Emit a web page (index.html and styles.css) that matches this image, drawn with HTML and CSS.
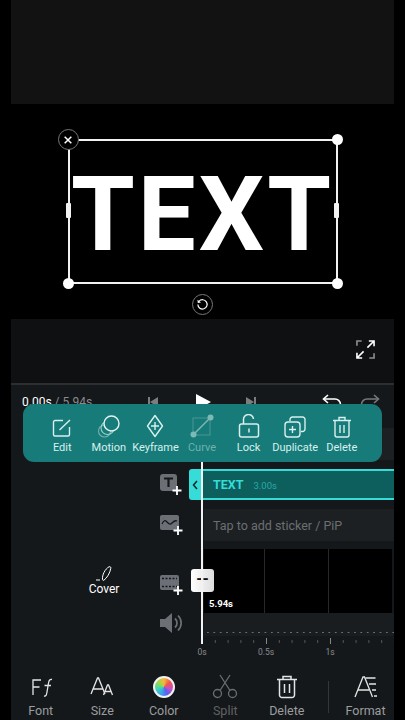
FILE: index.html
```html
<!DOCTYPE html>
<html lang="en">
<head>
<meta charset="utf-8">
<title>Text editor</title>
<link rel="stylesheet" href="styles.css">
</head>
<body>
<div class="app">
  <div class="preview-top"></div>
  <div class="stage">
    <div class="selection">
      <span class="sel-text">TEXT</span>
      <span class="knob knob-tr"></span>
      <span class="knob knob-bl"></span>
      <span class="knob knob-br"></span>
      <span class="grip grip-l"></span>
      <span class="grip grip-r"></span>
      <span class="round-btn round-close"><svg viewBox="0 0 12 12" width="10" height="10"><path d="M2 2l8 8M10 2l-8 8" stroke="#fff" stroke-width="1.800" fill="none"/></svg></span>
      <span class="round-btn round-rotate"><svg viewBox="0 0 14 14" width="13" height="13"><path d="M3.200 3.600A5 5 0 1 1 2 7" stroke="#fff" stroke-width="1.300" fill="none"/><path d="M1.600 1.800l.3 3.600 3.500-.6z" fill="#fff"/></svg></span>
    </div>
  </div>
  <div class="editor">
    <div class="viewer">
      <svg class="fullscreen" viewBox="0 0 20 20" width="19" height="19" fill="none" stroke-width="1.700"><path d="M1 6V1h5" stroke="#8d8f91"/><path d="M19 14v5h-5" stroke="#8d8f91"/><path d="M12 8l7-7M13.500 1H19v5.500" stroke="#fff"/><path d="M8 12l-7 7M6.500 19H1v-5.500" stroke="#fff"/></svg>
    </div>
    <div class="divider"></div>
    <div class="transport">
      <div class="time"><span class="time-now">0.00s</span><span class="time-total"> / 5.94s</span></div>
      <svg class="t-icon" viewBox="0 0 10 10" width="10" height="10"><path d="M0 0h2v10H0zM10 0v10L2 5z" fill="#7b7d7f"/></svg>
      <svg class="t-icon t-play" viewBox="0 0 15 16" width="15" height="16"><path d="M0 0l15 8-15 8z" fill="#fff"/></svg>
      <svg class="t-icon" viewBox="0 0 10 10" width="10" height="10"><path d="M10 0H8v10h2zM0 0v10l8-5z" fill="#7b7d7f"/></svg>
      <svg class="t-undo" viewBox="0 0 20 14" width="20" height="14" fill="none" stroke="#fff" stroke-width="1.600"><path d="M6 1L1.500 5 6 9"/><path d="M2 5h11a5.500 5.500 0 0 1 5.500 5.500V14"/></svg>
      <svg class="t-redo" viewBox="0 0 20 14" width="20" height="14" fill="none" stroke="#77797b" stroke-width="1.600"><path d="M14 1l4.500 4L14 9"/><path d="M18 5H7a5.500 5.500 0 0 0-5.500 5.500V14"/></svg>
    </div>
    <div class="hidden-track"></div>
    <div class="row row-text">
      <div class="gutter gutter-text">
        <svg class="add" viewBox="0 0 23 22" width="23" height="22"><rect x="0" y="0" width="17" height="17" rx="3" fill="#6d6f76"/><path d="M4 4.500h9M8.500 4.500V13" stroke="#15181b" stroke-width="2.200" fill="none"/><path d="M17 12v9M12.500 16.500h9" stroke="#fff" stroke-width="1.800"/></svg>
      </div>
      <div class="clip">
        <div class="clip-handle"><svg viewBox="0 0 6 10" width="6" height="10"><path d="M5 1L1.500 5 5 9" fill="none" stroke="#10282a" stroke-width="1.500"/></svg></div>
        <div class="clip-body"><span class="clip-name">TEXT</span><span class="clip-time">3.00s</span></div>
      </div>
    </div>
    <div class="row row-sticker">
      <div class="gutter">
        <svg class="add" viewBox="0 0 24 22" width="24" height="22"><rect x="0" y="1" width="19" height="15" rx="2" fill="#6d6f76"/><path d="M2 10c2-4 3-4 5-2s3 3 5 1 3-3 5-2M3 4.500h.1" stroke="#15181b" stroke-width="1.300" fill="none"/><path d="M18 12v9M13.500 16.500h9" stroke="#fff" stroke-width="1.800"/></svg>
      </div>
      <div class="sticker-slot">Tap to add sticker / PiP</div>
    </div>
    <div class="row row-video">
      <div class="gutter gutter-video">
        <div class="cover">
          <svg viewBox="0 0 16 15" width="16" height="15" fill="none" stroke="#fff" stroke-width="1"><path d="M0 14h4"/><path d="M6.500 13.500C6 9 9 3 13 .8c1.500-.5 2 .5 1.800 1.500C14 7 11 12 7.800 14.300c-.8.200-1.200-.2-1.300-.8z"/></svg>
          <span class="cover-label">Cover</span>
        </div>
        <svg class="add add-film" viewBox="0 0 24 22" width="24" height="22"><rect x="0" y="1" width="19" height="15" rx="2" fill="#6d6f76"/><path d="M2 4.500h15M2 12.500h15" stroke="#15181b" stroke-width="1.400" stroke-dasharray="2 1.500" fill="none"/><path d="M18 12v9M13.500 16.500h9" stroke="#fff" stroke-width="1.800"/></svg>
      </div>
      <div class="video-strip">
        <div class="frame"></div>
        <div class="frame"></div>
        <div class="frame frame-last"></div>
        <span class="duration">5.94s</span>
      </div>
      <div class="tail-handle">--</div>
    </div>
    <div class="row row-audio">
      <div class="gutter">
        <svg class="add add-speaker" viewBox="0 0 23 20" width="23" height="20"><path d="M0 6h5l7-6v20l-7-6H0z" fill="#6d6f76"/><path d="M15 5.500a6 6 0 0 1 0 9M18 2.500a10.500 10.500 0 0 1 0 15" stroke="#6d6f76" stroke-width="1.700" fill="none"/></svg>
      </div>
      <div class="audio-slot"></div>
    </div>
    <div class="ruler">
      <div class="ticks"></div>
      <div class="ruler-labels"><span>0s</span><span>0.5s</span><span>1s</span></div>
    </div>
    <div class="tabs">
      <div class="tab">
        <svg viewBox="0 0 26 26" width="26" height="26" fill="none" stroke="#e4e4e4" stroke-width="1.300"><path d="M5 21V6h8M5 13h6.500"/><path d="M16 22c2 .5 2.500-1 3-4l1.500-9c.5-3 1.500-4 3.500-3.500M16.500 11.500h6.500"/></svg>
        <span>Font</span>
      </div>
      <div class="tab">
        <svg viewBox="0 0 26 26" width="26" height="26" fill="none" stroke="#e4e4e4" stroke-width="1.300"><path d="M2 20l6.500-16h1L16 20M4.500 15h9"/><path d="M14.500 21l4-10h1l4 10M16 17.500h6"/></svg>
        <span>Size</span>
      </div>
      <div class="tab">
        <span class="swatch"></span>
        <span>Color</span>
      </div>
      <div class="tab tab-dim">
        <svg viewBox="0 0 26 26" width="26" height="26" fill="none" stroke="#6b6d6f" stroke-width="1.300"><circle cx="5.500" cy="19.500" r="4"/><circle cx="20.500" cy="19.500" r="4"/><path d="M8 16.500L18 1M18 16.500L8 1"/></svg>
        <span>Split</span>
      </div>
      <div class="tab">
        <svg viewBox="0 0 26 26" width="26" height="26" fill="none" stroke="#e4e4e4" stroke-width="1.500"><path d="M3 5.500h20M9 5V2.500h8V5M5.500 6v15a2.500 2.500 0 0 0 2.500 2.500h10a2.500 2.500 0 0 0 2.500-2.500V6M10.500 10v9M15.500 10v9"/></svg>
        <span>Delete</span>
      </div>
      <div class="tab-sep"></div>
      <div class="tab tab-format">
        <svg viewBox="0 0 26 26" width="26" height="26" fill="none" stroke="#e4e4e4" stroke-width="1.300"><path d="M2 23L10 3h1.500l8 20M5 16h11"/><path d="M12.500 4h10M16 10h7M19 16h4M21 22h3"/></svg>
        <span>Format</span>
      </div>
    </div>
    <div class="playhead"></div>
    <div class="menu">
      <div class="menu-item">
        <svg viewBox="0 0 20 20" width="20" height="20" fill="none" stroke="#d8f0ee" stroke-width="1.400"><path d="M11 2.500H3a1.500 1.500 0 0 0-1.500 1.500v12.500A1.500 1.500 0 0 0 3 18h13a1.500 1.500 0 0 0 1.500-1.500V9"/><path d="M7.500 12L18 2"/></svg>
        <span>Edit</span>
      </div>
      <div class="menu-item">
        <svg viewBox="0 0 24 24" width="24" height="24" fill="none"><circle cx="7.500" cy="17" r="6" stroke="#6fb2ae" stroke-width="1.100"/><circle cx="10.500" cy="14" r="6.500" stroke="#a0cdca" stroke-width="1.100"/><circle cx="14.500" cy="9.500" r="7.500" fill="#167b79" stroke="#e4f4f2" stroke-width="1.400"/></svg>
        <span>Motion</span>
      </div>
      <div class="menu-item">
        <svg viewBox="0 0 20 24" width="20" height="24" fill="none" stroke="#d8f0ee" stroke-width="1.400"><path d="M10 1.500L17.500 12 10 22.500 2.500 12z" stroke-linejoin="round"/><path d="M10 8v8M6 12h8"/></svg>
        <span>Keyframe</span>
      </div>
      <div class="menu-item menu-dim">
        <svg viewBox="0 0 24 24" width="24" height="24" fill="none"><rect x="3" y="4" width="17" height="17" stroke="#4d9793" stroke-width="1"/><path d="M3.500 20.500L20.500 3.500" stroke="#7dbab6" stroke-width="1.400"/><circle cx="3.500" cy="20.500" r="3" fill="#7dbab6"/><circle cx="20.500" cy="3.500" r="3" fill="#7dbab6"/></svg>
        <span>Curve</span>
      </div>
      <div class="menu-item">
        <svg viewBox="0 0 22 24" width="22" height="24" fill="none" stroke="#d8f0ee" stroke-width="1.500"><rect x="1.500" y="10" width="19" height="13" rx="2"/><path d="M5.500 10V6a5 5 0 0 1 10-1M11 14.500v4"/></svg>
        <span>Lock</span>
      </div>
      <div class="menu-item">
        <svg viewBox="0 0 22 22" width="22" height="22" fill="none" stroke="#d8f0ee" stroke-width="1.400"><rect x="1" y="6" width="15" height="15" rx="3"/><path d="M6 5V3.500A2.500 2.500 0 0 1 8.500 1h10A2.500 2.500 0 0 1 21 3.500V13a2.500 2.500 0 0 1-2.500 2.500H17M8.500 10v7M5 13.500h7"/></svg>
        <span>Duplicate</span>
      </div>
      <div class="menu-item">
        <svg viewBox="0 0 20 22" width="20" height="22" fill="none" stroke="#d8f0ee" stroke-width="1.400"><path d="M1 4.500h18M7 4V1.500h6V4M3 5v14a2 2 0 0 0 2 2h10a2 2 0 0 0 2-2V5M8 9v8M12 9v8"/></svg>
        <span>Delete</span>
      </div>
    </div>
  </div>
</div>
</body>
</html>
```
FILE: styles.css
```css
* { box-sizing: border-box; }
html, body { margin: 0; padding: 0; background: #000; }
body { font-family: Roboto, "Liberation Sans", sans-serif; }
.app { width: 405px; height: 720px; padding: 0 11px; display: flex; flex-direction: column; overflow: hidden; background: #000; }

.preview-top { height: 104px; flex: none; background: #121212; }
.stage { height: 215px; flex: none; display: flex; align-items: center; justify-content: center; }
.selection { position: relative; width: 270px; height: 145px; border: 2px solid #f2f2f2; display: flex; align-items: center; justify-content: center; padding-top: 5px; }
.sel-text { font-family: Roboto, "Liberation Sans", sans-serif; font-weight: 700; font-size: 103px; line-height: 1; color: #fff; letter-spacing: 3px; white-space: nowrap; }
.knob { position: absolute; width: 11px; height: 11px; border-radius: 50%; background: #fff; }
.knob-tr { top: -7px; right: -7px; }
.knob-bl { bottom: -7px; left: -7px; }
.knob-br { bottom: -7px; right: -7px; }
.grip { position: absolute; top: 62px; width: 5px; height: 15px; background: #f2f2f2; border-radius: 1px; }
.grip-l { left: -3.500px; }
.grip-r { right: -3.500px; }
.round-btn { position: absolute; width: 21px; height: 21px; border-radius: 50%; background: #000; border: 1px solid #777; display: flex; align-items: center; justify-content: center; }
.round-close { left: -12px; top: -12px; }
.round-rotate { left: 122px; bottom: -33px; }

.editor { position: relative; flex: 1; display: flex; flex-direction: column; background: #15181b; overflow: hidden; }
.viewer { height: 64px; flex: none; background: #0f1012; display: flex; align-items: center; justify-content: flex-end; padding: 0 19px 4px 0; }
.divider { height: 2px; flex: none; background: #2c2e30; }

.transport { height: 40px; flex: none; display: flex; align-items: flex-start; padding-top: 9px; }
.time { width: 137px; padding-left: 11px; padding-top: 1px; font-size: 12px; line-height: 15px; white-space: nowrap; }
.time-now { color: #fff; }
.time-total { color: #8a8c8e; }
.t-icon { flex: none; margin-top: 3px; }
.t-play { margin: 0 35px 0 38px; }
.t-undo { flex: none; margin-left: 66px; }
.t-redo { flex: none; margin-left: 18px; }

.hidden-track { height: 32px; margin: 3px 0 9px 193px; flex: none; background: #1d2023; }

.row { display: flex; flex: none; position: relative; }
.gutter { flex: none; width: 193px; padding-left: 149px; display: flex; align-items: center; }
.row-text { height: 31px; margin-bottom: 9px; }
.gutter-text { width: 178px; }
.clip { flex: 1; display: flex; min-width: 0; }
.clip-handle { width: 13px; flex: none; background: #35dcd8; border-radius: 3px 0 0 3px; display: flex; align-items: center; justify-content: center; padding-right: 2px; }
.clip-body { flex: 1; background: #0c5f5c; border-top: 2px solid #35dcd8; border-bottom: 2px solid #35dcd8; padding-left: 11px; display: flex; align-items: center; gap: 10px; }
.clip-name { color: #35dcd8; font-size: 12.500px; font-weight: 700; }
.clip-time { color: #2aa8a4; font-size: 9.500px; padding-top: 1px; }

.row-sticker { height: 32px; margin-bottom: 8px; }
.sticker-slot { flex: 1; background: #1d2023; color: #6c6f72; font-size: 12.500px; padding-left: 9px; display: flex; align-items: center; }

.row-video { height: 64px; }
.gutter-video { padding-left: 63px; gap: 41px; padding-top: 8px; align-items: flex-start; }
.cover { width: 60px; margin-top: 9px; display: flex; flex-direction: column; align-items: center; }
.cover-label { color: #fff; font-size: 12px; line-height: 15px; margin-top: 1px; }
.add { flex: none; }
.add-film { margin-top: 17px; margin-left: -15px; }
.add-speaker { margin-top: -4px; }
.video-strip { position: relative; flex: none; width: 188px; background: #000; display: flex; }
.frame { width: 64px; border-right: 1px solid #26282a; flex: none; }
.frame:first-child { width: 61px; }
.frame-last { border-right: 0; flex: 1; }
.duration { position: absolute; left: 5px; bottom: 3px; color: #fff; font-size: 9.500px; font-weight: 700; line-height: 12px; }
.tail-handle { position: absolute; left: 180px; top: 20px; width: 23px; height: 23px; border-radius: 3px; background: linear-gradient(90deg, #fff, #ddd); color: #111; font-size: 16px; font-weight: 700; line-height: 20px; text-align: center; }

.row-audio { height: 23px; }
.audio-slot { flex: 1; background-color: #1a1d20; background-image: radial-gradient(circle at 1px 19.500px, #6c6f72 .7px, transparent 1px); background-size: 6.400px 23px; background-position: 3px 0; }

.ruler { height: 24px; flex: none; position: relative; }
.ticks { height: 8px; margin: 2px 0 0 191px; background-image: linear-gradient(90deg, #888 1.500px, transparent 1.500px), linear-gradient(90deg, #555 1px, transparent 1px); background-size: 64px 6px, 12.800px 3px; background-position: 0 0, 0 2px; background-repeat: repeat-x; }
.ruler-labels { display: flex; padding-left: 159px; margin-top: 0; }
.ruler-labels span { width: 64px; text-align: center; color: #8a8c8e; font-size: 8.500px; line-height: 12px; }

.tabs { flex: 1; display: flex; align-items: flex-start; margin-left: -1px; padding-top: 14px; }
.tab { width: 61.500px; flex: none; display: flex; flex-direction: column; align-items: center; gap: 3px; color: #9b9d9f; font-size: 12.500px; line-height: 15px; white-space: nowrap; }
.tab svg, .swatch { flex: none; }
.tab-dim { color: #606264; }
.tab-sep { width: 1px; height: 32px; margin: 7px 0 0 10px; background: #33363a; flex: none; }
.tab-format { width: 60px; margin-left: 7px; }
.swatch { width: 22px; height: 22px; margin: 2px 0; border-radius: 50%; border: 2.500px solid #f2f2f2; background: conic-gradient(#f6b73c, #f0564a, #c750c8, #5a60e8, #3ba6f0, #42d6b0, #9ad94a, #f6b73c); }

.playhead { position: absolute; left: 190px; top: 86px; width: 2px; height: 239px; background: #f2f2f2; }
.menu { position: absolute; left: 12px; top: 85px; width: 359px; height: 58px; padding: 0 17px 0 16px; background: #167b79; border-radius: 11px; display: flex; align-items: flex-start; }
.menu-item { flex: 1 1 0; min-width: 0; height: 58px; display: flex; flex-direction: column; align-items: center; justify-content: flex-end; padding-bottom: 7px; color: #d8f0ee; font-size: 11px; line-height: 14px; white-space: nowrap; gap: 3px; }
.menu-item svg { flex: none; }
.menu-dim { color: #6fb2ae; }
```
